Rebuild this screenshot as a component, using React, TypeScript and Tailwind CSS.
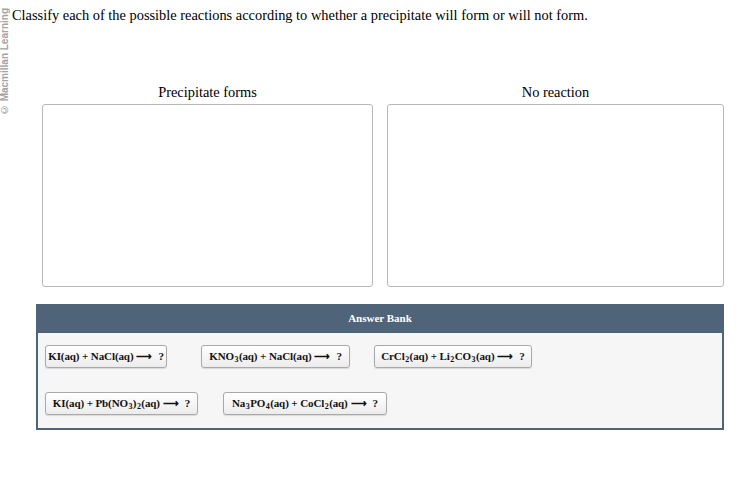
import React from "react";

const serif = { fontFamily: '"Liberation Serif", "Times New Roman", serif' };

function Sub({ children }: { children: React.ReactNode }) {
  return (
    <span className="inline-block text-[8px] leading-none relative top-[3px] mx-[0.5px]">{children}</span>
  );
}

function Arrow() {
  return (
    <>
      <span className="mx-[3px]">⟶</span>
      <span className="ml-[3px]">?</span>
    </>
  );
}

function Chip({ w, ml, children }: { w: string; ml: string; children: React.ReactNode }) {
  return (
    <div
      className={`${w} ${ml} h-[23px] flex items-center justify-center rounded-[3px] border border-[#a9a9a9] bg-gradient-to-b from-white to-[#ececec] shadow-[0_1px_1px_rgba(0,0,0,0.12)] text-[11px] font-bold text-[#111] whitespace-nowrap tracking-[-0.1px]`}
    >
      {children}
    </div>
  );
}

export default function App() {
  return (
    <div className="relative w-[739px] h-[497px] bg-white text-black" style={serif}>
      {/* rotated copyright mark */}
      <div
        className="absolute left-0 top-[8px] text-[10px] leading-[10px] text-[#a3a3a3] font-bold [writing-mode:vertical-rl] rotate-180 whitespace-nowrap"
        style={{ fontFamily: '"Liberation Sans", Arial, sans-serif' }}
      >
        © Macmillan Learning
      </div>

      <div className="pl-[12px] pt-[6px] text-[14.4px] leading-[18px]">
        Classify each of the possible reactions according to whether a precipitate will form or will not form.
      </div>

      <div className="flex pl-[42px] gap-[14px] mt-[59px]">
        <div className="w-[331px] flex flex-col">
          <div className="text-[14.4px] leading-[18px] text-center">Precipitate forms</div>
          <div className="mt-[3px] h-[183px] rounded-[3px] border border-[#b8b8b8]" />
        </div>
        <div className="w-[337px] flex flex-col">
          <div className="text-[14.4px] leading-[18px] text-center">No reaction</div>
          <div className="mt-[3px] h-[183px] rounded-[3px] border border-[#b8b8b8]" />
        </div>
      </div>

      <div className="ml-[36px] mt-[17px] w-[688px]">
        <div className="h-[29px] bg-[#506479] flex items-center justify-center text-white text-[11px] font-bold">
          Answer Bank
        </div>
        <div className="h-[97px] bg-[#f6f6f6] border-x-[2px] border-b-[2px] border-[#506479] pt-[12px]">
          <div className="flex">
            <Chip w="w-[122px]" ml="ml-[7px]">
              KI(aq) + NaCl(aq)
              <Arrow />
            </Chip>
            <Chip w="w-[149px]" ml="ml-[34px]">
              KNO<Sub>3</Sub>(aq) + NaCl(aq)
              <Arrow />
            </Chip>
            <Chip w="w-[158px]" ml="ml-[24px]">
              CrCl<Sub>2</Sub>(aq) + Li<Sub>2</Sub>CO<Sub>3</Sub>(aq)
              <Arrow />
            </Chip>
          </div>
          <div className="flex mt-[24px]">
            <Chip w="w-[153px]" ml="ml-[7px]">
              KI(aq) + Pb(NO<Sub>3</Sub>)<Sub>2</Sub>(aq)
              <Arrow />
            </Chip>
            <Chip w="w-[164px]" ml="ml-[25px]">
              Na<Sub>3</Sub>PO<Sub>4</Sub>(aq) + CoCl<Sub>2</Sub>(aq)
              <Arrow />
            </Chip>
          </div>
        </div>
      </div>
    </div>
  );
}
